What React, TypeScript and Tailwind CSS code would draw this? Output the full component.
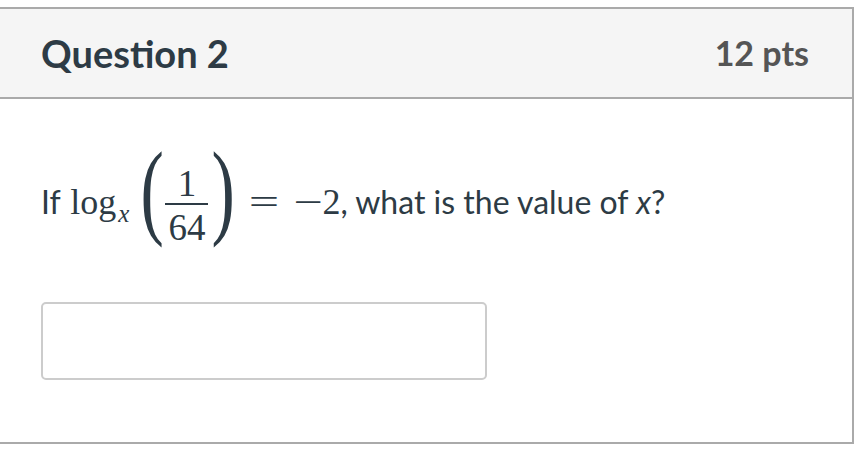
import React from 'react'

const serif = { fontFamily: '"Liberation Serif", "Times New Roman", serif' }

function Paren(props: { side: 'left' | 'right' }) {
  return (
    <span
      className="inline-block w-[22px] origin-center -translate-y-[16px] scale-y-[1.5] text-center align-middle text-[70px] leading-[70px] text-[#2d3b45]"
      style={serif}
    >
      {props.side === 'left' ? '(' : ')'}
    </span>
  )
}

function Fraction(props: { num: string; den: string }) {
  return (
    <span
      className="inline-flex w-[43px] -translate-y-[2px] flex-col items-center align-middle"
      style={serif}
    >
      <span className="block pt-[4px] text-[37px] leading-[36px]">{props.num}</span>
      <span className="my-[1px] block h-[1.5px] w-full bg-[#2d3b45]" />
      <span className="block pt-[4px] text-[37px] leading-[36px]">{props.den}</span>
    </span>
  )
}

export default function App() {
  return (
    <div
      className="min-h-screen bg-white pt-[7px]"
      style={{ fontFamily: 'Lato, "Liberation Sans", sans-serif' }}
    >
      <div className="w-[854px] border-2 border-l-0 border-[#aaaaaa]">
        <div className="flex h-[90px] items-center justify-between border-b-2 border-[#aaaaaa] bg-[#f5f5f5] pl-[41px] pr-[43px]">
          <h2 className="text-[38px] leading-none font-bold text-[#2d3b45]">Question 2</h2>
          <div className="text-[34px] leading-none font-bold text-[#555555]">12 pts</div>
        </div>

        <div className="h-[343px] pl-[41px] pt-[65px]">
          <p className="text-[32px] leading-[32px] text-[#2d3b45]">
            If{' '}
            <span className="ml-[2px] text-[36px]" style={serif}>
              log
              <span className="ml-[2px] align-[-8px] text-[25px] italic">x</span>
            </span>
            <span className="ml-[11px]">
              <Paren side="left" />
            </span>
            <span className="ml-[3px]">
              <Fraction num="1" den="64" />
            </span>
            <span className="ml-[3px]">
              <Paren side="right" />
            </span>
            <span
              className="ml-[17px] inline-block w-[28px] scale-x-[1.5] text-center text-[36px]"
              style={serif}
            >
              =
            </span>
            <span
              className="ml-[16px] inline-block w-[28px] scale-x-[1.45] text-center text-[36px]"
              style={serif}
            >
              −
            </span>
            <span className="text-[36px]" style={serif}>
              2
            </span>
            , what is the value of <i>x</i>?
          </p>

          <div className="mt-[54px] h-[78px] w-[446px] rounded-[5px] border-2 border-[#cccccc] bg-white" />
        </div>
      </div>
    </div>
  )
}
